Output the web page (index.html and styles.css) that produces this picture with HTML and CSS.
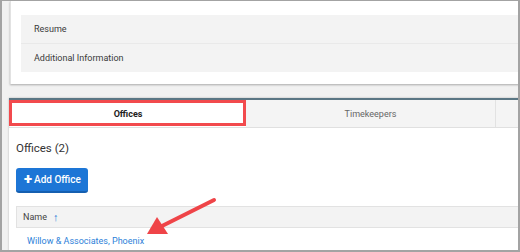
FILE: index.html
```html
<!DOCTYPE html>
<html>
<head>
<meta charset="utf-8">
<link rel="stylesheet" href="styles.css">
</head>
<body>
<div class="frame">
  <div class="card top-card">
    <div class="list">
      <div class="list-row">Resume</div>
      <div class="list-row">Additional Information</div>
    </div>
  </div>
  <div class="card main-card">
    <div class="tabs">
      <div class="tab tab-active">Offices</div>
      <div class="tab">Timekeepers</div>
      <div class="tab tab-more"></div>
      <div class="highlight"></div>
    </div>
    <div class="content">
      <h2 class="heading">Offices (2)</h2>
      <button class="btn-add"><span class="plus">+</span>Add Office</button>
      <div class="table">
        <div class="thead">Name <span class="sort">&#8593;</span></div>
        <div class="trow"><a class="link" href="#">Willow &amp; Associates, Phoenix</a></div>
      </div>
    </div>
  </div>
  <svg class="arrow" width="520" height="252" viewBox="0 0 520 252">
    <line x1="212" y1="199" x2="158" y2="226" stroke="#ef4448" stroke-width="4" stroke-linecap="round"/>
    <polygon points="145,233 155,216 166,233" fill="#ef4448"/>
  </svg>
</div>
</body>
</html>
```
FILE: styles.css
```css
* { box-sizing: border-box; }
html, body { margin: 0; padding: 0; }
body { font-family: Roboto, "Noto Sans", Arial, sans-serif; color: #333; }

.frame {
  position: relative;
  width: 520px;
  height: 252px;
  overflow: hidden;
  background: #f1f1f1;
  border: 2px solid #a3a3a3;
  border-top: 1px solid #a3a3a3;
  padding-left: 8px;
}

.card { background: #fff; }

.top-card {
  margin-right: -20px;
  padding: 14px 0 12px 10px;
  box-shadow: 0 1px 2px rgba(0,0,0,0.3);
  border-left: 1px solid #e2e2e2;
}

.list { background: #f3f3f3; }
.list-row {
  height: 28px;
  display: flex;
  align-items: center;
  padding-left: 13px;
  font-size: 9px;
  color: #3a3a3a;
}
.list-row + .list-row { border-top: 1px solid #e9e9e9; height: 29px; }

.main-card {
  margin-top: 14px;
  margin-left: -1px;
  margin-right: -20px;
  height: 200px;
  border-top: 2px solid #5a7684;
  box-shadow: 0 0 2px rgba(0,0,0,0.25);
}

.tabs {
  position: relative;
  display: flex;
  height: 28px;
  border-bottom: 1px solid #e0e0e0;
  background: #f4f4f4;
}
.tab {
  display: flex;
  align-items: center;
  justify-content: center;
  font-size: 9px;
  color: #666;
  border-right: 1px solid #e2e2e2;
}
.tab-active {
  width: 236px;
  background: #fff;
  color: #222;
  font-weight: 700;
  border-right: none;
  margin-left: 1px;
}
.tab:nth-child(2) { width: 250px; }
.tab-more { flex: 1; border-right: none; }

.highlight {
  position: absolute;
  left: 0;
  top: 0;
  width: 237px;
  height: 26px;
  border: 3px solid #f24a4d;
}

.content { padding: 12px 0 0 7px; }

.heading {
  margin: 0;
  font-size: 11.5px;
  line-height: 16px;
  font-weight: 400;
  color: #333;
}

.btn-add {
  margin-top: 12px;
  display: flex;
  align-items: center;
  width: 72px;
  height: 25px;
  padding: 0 0 0 8px;
  border: none;
  border-bottom: 2px solid #155fb0;
  border-radius: 3px;
  background: #1d76d6;
  color: #fff;
  font-family: Roboto, Arial, sans-serif;
  font-size: 10px;
  font-weight: 500;
}
.plus { font-size: 15px; font-weight: 900; margin-right: 2px; line-height: 1; }

.table { margin-top: 13px; }
.thead {
  height: 22px;
  display: flex;
  align-items: center;
  padding-left: 6px;
  background: #f3f3f3;
  border: 1px solid #e2e2e2;
  font-size: 9px;
  color: #444;
}
.sort { color: #2b7bd6; margin-left: 6px; font-size: 11px; font-weight: 700; }
.trow {
  height: 26px;
  display: flex;
  align-items: center;
  padding-left: 11px;
}
.link {
  font-size: 9px;
  color: #2d7fd9;
  text-decoration: none;
}

.arrow {
  position: absolute;
  left: 0;
  top: 0;
  pointer-events: none;
}
```
